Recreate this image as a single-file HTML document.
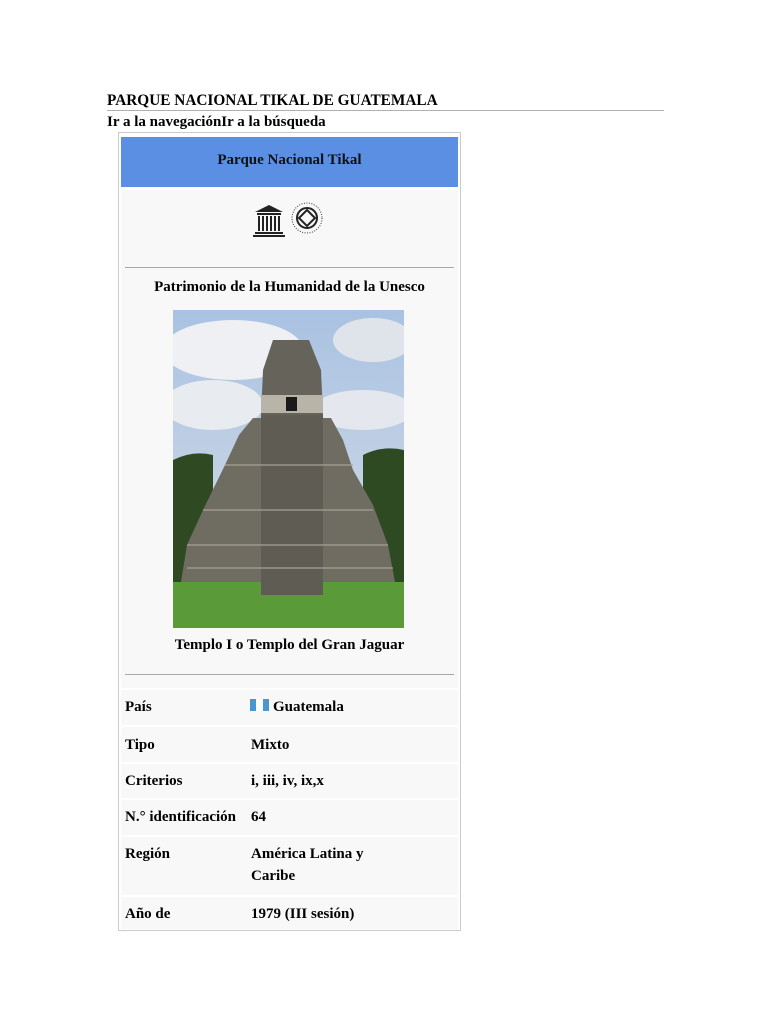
<!DOCTYPE html>
<html><head><meta charset="utf-8"><style>
body{margin:0;width:768px;height:1024px;background:#fff;position:relative;font-family:"Liberation Serif",serif;font-weight:bold;font-size:15px;color:#000;overflow:hidden}
.a{position:absolute;white-space:nowrap}
.cell{position:absolute;background:#f8f8f8}
</style></head><body>
<div class="a" style="left:107px;top:92px;font-size:15.3px">PARQUE NACIONAL TIKAL DE GUATEMALA</div>
<div class="a" style="left:107px;top:110px;width:557px;height:1px;background:#b0b0b0"></div>
<div class="a" style="left:107px;top:114px">Ir a la navegaciónIr a la búsqueda</div>

<div class="a" style="left:118px;top:132px;width:341px;height:797px;border:1px solid #c8ccd1;background:#fff"></div>
<div class="a" style="left:121px;top:137px;width:337px;height:50px;background:#5b8fe3"></div>
<div class="a" style="left:121px;top:152px;width:337px;text-align:center;color:#111">Parque Nacional Tikal</div>
<div class="cell" style="left:121px;top:190px;width:337px;height:498px"></div>
<svg class="a" style="left:252px;top:201px" width="75" height="38" viewBox="0 0 75 38">
<path d="M3 11 L17 4 L31 11 Z" fill="#222"/><rect x="5" y="12" width="24" height="2" fill="#222"/>
<g fill="#222"><rect x="6" y="15" width="2" height="15"/><rect x="10" y="15" width="2" height="15"/><rect x="14" y="15" width="2" height="15"/><rect x="18" y="15" width="2" height="15"/><rect x="22" y="15" width="2" height="15"/><rect x="26" y="15" width="2" height="15"/></g>
<rect x="3" y="31" width="28" height="2" fill="#222"/><rect x="1" y="34" width="32" height="2" fill="#222"/>
<circle cx="55" cy="17" r="15" fill="none" stroke="#333" stroke-width="1" stroke-dasharray="1 1.5"/>
<circle cx="55" cy="17" r="10" fill="none" stroke="#222" stroke-width="2"/>
<path d="M55 9 L63 17 L55 25 L47 17 Z" fill="none" stroke="#222" stroke-width="2"/>
</svg>
<div class="a" style="left:125px;top:267px;width:329px;height:1px;background:#a2a9b1"></div>
<div class="a" style="left:121px;top:279px;width:337px;text-align:center">Patrimonio de la Humanidad de la Unesco</div>

<svg class="a" style="left:173px;top:310px" width="231" height="318" viewBox="0 0 231 318">
<defs><linearGradient id="s" x1="0" y1="0" x2="0" y2="1"><stop offset="0" stop-color="#a9c2e2"/><stop offset="1" stop-color="#d9dfe6"/></linearGradient></defs>
<rect width="231" height="318" fill="url(#s)"/>
<ellipse cx="60" cy="40" rx="70" ry="30" fill="#eef0f3"/><ellipse cx="40" cy="95" rx="50" ry="25" fill="#e8ebef"/><ellipse cx="190" cy="100" rx="50" ry="20" fill="#e4e8ee"/><ellipse cx="200" cy="30" rx="40" ry="22" fill="#dfe4ea"/>
<path d="M0 150 Q20 140 40 145 L40 275 L0 275Z" fill="#2f4a22"/>
<path d="M190 145 Q210 135 231 140 L231 285 L190 285Z" fill="#2e4a22"/>
<rect x="0" y="272" width="231" height="46" fill="#5a9a38"/>
<path d="M8 272 L14 235 L30 200 L52 155 L66 125 L80 108 L158 108 L170 130 L180 160 L200 195 L215 235 L222 272 Z" fill="#6f6c62"/>
<path d="M100 30 L136 30 L148 60 L150 105 L88 105 L90 60 Z" fill="#66635a"/>
<rect x="88" y="85" width="62" height="18" fill="#b8b4a8"/><rect x="113" y="87" width="11" height="14" fill="#1a1a1a"/>
<rect x="88" y="105" width="62" height="180" fill="#5f5c54"/>
<g stroke="#a9a597" stroke-width="2" opacity=".6"><line x1="14" y1="235" x2="215" y2="235"/><line x1="30" y1="200" x2="200" y2="200"/><line x1="52" y1="155" x2="180" y2="155"/><line x1="14" y1="258" x2="220" y2="258"/></g>
</svg>
<div class="a" style="left:121px;top:637px;width:337px;text-align:center">Templo I o Templo del Gran Jaguar</div>
<div class="a" style="left:125px;top:674px;width:329px;height:1px;background:#a2a9b1"></div>

<div class="cell" style="left:121px;top:690px;width:337px;height:35px"></div>
<div class="cell" style="left:121px;top:727px;width:337px;height:35px"></div>
<div class="cell" style="left:121px;top:764px;width:337px;height:34px"></div>
<div class="cell" style="left:121px;top:800px;width:337px;height:35px"></div>
<div class="cell" style="left:121px;top:837px;width:337px;height:58px"></div>
<div class="cell" style="left:121px;top:897px;width:337px;height:32px"></div>

<div class="a" style="left:125px;top:699px">País</div>
<div class="a" style="left:250px;top:699px;width:6px;height:12px;background:#4997d0"></div>
<div class="a" style="left:256px;top:699px;width:7px;height:12px;background:#fff"></div>
<div class="a" style="left:263px;top:699px;width:6px;height:12px;background:#4997d0"></div>
<div class="a" style="left:273px;top:699px">Guatemala</div>
<div class="a" style="left:125px;top:737px">Tipo</div><div class="a" style="left:251px;top:737px">Mixto</div>
<div class="a" style="left:125px;top:773px">Criterios</div><div class="a" style="left:251px;top:773px">i, iii, iv, ix,x</div>
<div class="a" style="left:125px;top:809px">N.° identificación</div><div class="a" style="left:251px;top:809px">64</div>
<div class="a" style="left:125px;top:846px">Región</div><div class="a" style="left:251px;top:843px;line-height:22px">América Latina y<br>Caribe</div>
<div class="a" style="left:125px;top:906px">Año de</div><div class="a" style="left:251px;top:906px">1979 (III sesión)</div>
</body></html>
